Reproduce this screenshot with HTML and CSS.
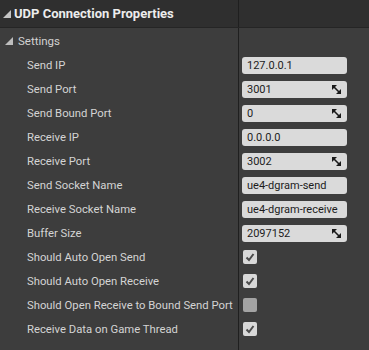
FILE: index.html
```html
<!DOCTYPE html>
<html>
<head>
<meta charset="utf-8">
<link rel="stylesheet" href="styles.css">
</head>
<body>
<div class="panel">
  <div class="row header">
    <div class="name"><span class="tri"></span><span class="title">UDP Connection Properties</span></div>
    <div class="value"></div>
  </div>
  <div class="row category">
    <div class="name"><span class="tri"></span><span>Settings</span></div>
    <div class="value"></div>
  </div>
  <div class="row prop">
    <div class="name">Send IP</div>
    <div class="value"><div class="field">127.0.0.1</div></div>
  </div>
  <div class="row prop">
    <div class="name">Send Port</div>
    <div class="value"><div class="field num">3001<svg class="spin" viewBox="0 0 9 9"><polygon points="0,0 5,0 0,5"/><polygon points="9,4 9,9 4,9"/><line x1="2" y1="2" x2="7" y2="7"/></svg></div></div>
  </div>
  <div class="row prop">
    <div class="name">Send Bound Port</div>
    <div class="value"><div class="field num">0<svg class="spin" viewBox="0 0 9 9"><polygon points="0,0 5,0 0,5"/><polygon points="9,4 9,9 4,9"/><line x1="2" y1="2" x2="7" y2="7"/></svg></div></div>
  </div>
  <div class="row prop">
    <div class="name">Receive IP</div>
    <div class="value"><div class="field">0.0.0.0</div></div>
  </div>
  <div class="row prop">
    <div class="name">Receive Port</div>
    <div class="value"><div class="field num">3002<svg class="spin" viewBox="0 0 9 9"><polygon points="0,0 5,0 0,5"/><polygon points="9,4 9,9 4,9"/><line x1="2" y1="2" x2="7" y2="7"/></svg></div></div>
  </div>
  <div class="row prop">
    <div class="name">Send Socket Name</div>
    <div class="value"><div class="field">ue4-dgram-send</div></div>
  </div>
  <div class="row prop">
    <div class="name">Receive Socket Name</div>
    <div class="value"><div class="field">ue4-dgram-receive</div></div>
  </div>
  <div class="row prop">
    <div class="name">Buffer Size</div>
    <div class="value"><div class="field num">2097152<svg class="spin" viewBox="0 0 9 9"><polygon points="0,0 5,0 0,5"/><polygon points="9,4 9,9 4,9"/><line x1="2" y1="2" x2="7" y2="7"/></svg></div></div>
  </div>
  <div class="row prop">
    <div class="name">Should Auto Open Send</div>
    <div class="value"><div class="check on"><svg viewBox="0 0 14 14"><polyline points="3.5,7.5 6,10 10.5,4"/></svg></div></div>
  </div>
  <div class="row prop">
    <div class="name">Should Auto Open Receive</div>
    <div class="value"><div class="check on"><svg viewBox="0 0 14 14"><polyline points="3.5,7.5 6,10 10.5,4"/></svg></div></div>
  </div>
  <div class="row prop">
    <div class="name">Should Open Receive to Bound Send Port</div>
    <div class="value"><div class="check off"></div></div>
  </div>
  <div class="row prop">
    <div class="name">Receive Data on Game Thread</div>
    <div class="value"><div class="check on"><svg viewBox="0 0 14 14"><polyline points="3.5,7.5 6,10 10.5,4"/></svg></div></div>
  </div>
  <div class="row filler">
    <div class="name"></div>
    <div class="value"></div>
  </div>
</div>
</body>
</html>
```
FILE: styles.css
```css
html, body {
  margin: 0;
  padding: 0;
  background: #3d3d3d;
}
body {
  font-family: Roboto, "Liberation Sans", sans-serif;
  font-size: 11.3px;
  color: #d4d4d4;
  width: 369px;
  height: 350px;
  overflow: hidden;
}
.panel {
  display: flex;
  flex-direction: column;
  height: 350px;
}
.row {
  display: grid;
  grid-template-columns: 238px 1fr;
}
.name {
  display: flex;
  align-items: center;
  white-space: nowrap;
  overflow: hidden;
}
.value {
  display: flex;
  align-items: center;
  border-left: 1px solid #1f1f1f;
  padding-left: 3px;
}
.header {
  height: 27px;
  background: #2f2f2f;
  border-bottom: 1px solid #252525;
}
.header .name {
  padding-left: 3px;
  gap: 3px;
}
.title {
  font-weight: bold;
  font-size: 13px;
  color: #ececec;
}
.tri {
  width: 0;
  height: 0;
  border-style: solid;
  border-width: 0 0 8px 8px;
  border-color: transparent transparent #c4c4c4 transparent;
  margin-top: 1px;
}
.category {
  height: 25px;
}
.category .name {
  padding-left: 5px;
  gap: 5px;
  font-size: 11.5px;
  color: #d2d2d2;
}
.category .tri {
  border-color: transparent transparent #bdbdbd transparent;
}
.prop {
  height: 24px;
}
.prop .name {
  padding-left: 27px;
}
.filler {
  flex: 1;
}
.field {
  box-sizing: border-box;
  min-width: 105px;
  height: 17px;
  background: #dadada;
  border-radius: 3px;
  color: #1c1c1c;
  padding: 0 5px;
  display: flex;
  align-items: center;
  justify-content: space-between;
  font-size: 11px;
}
.spin {
  width: 9px;
  height: 9px;
  margin-right: 1px;
}
.spin polygon {
  fill: #1a1a1a;
}
.spin line {
  stroke: #1a1a1a;
  stroke-width: 1.6;
}
.check {
  width: 14px;
  height: 14px;
  border-radius: 2px;
  margin-left: 1px;
}
.check.on {
  background: #d8d8d8;
}
.check.off {
  background: #a3a3a3;
}
.check svg {
  width: 14px;
  height: 14px;
  display: block;
}
.check polyline {
  fill: none;
  stroke: #4b4b4b;
  stroke-width: 2;
}
```
